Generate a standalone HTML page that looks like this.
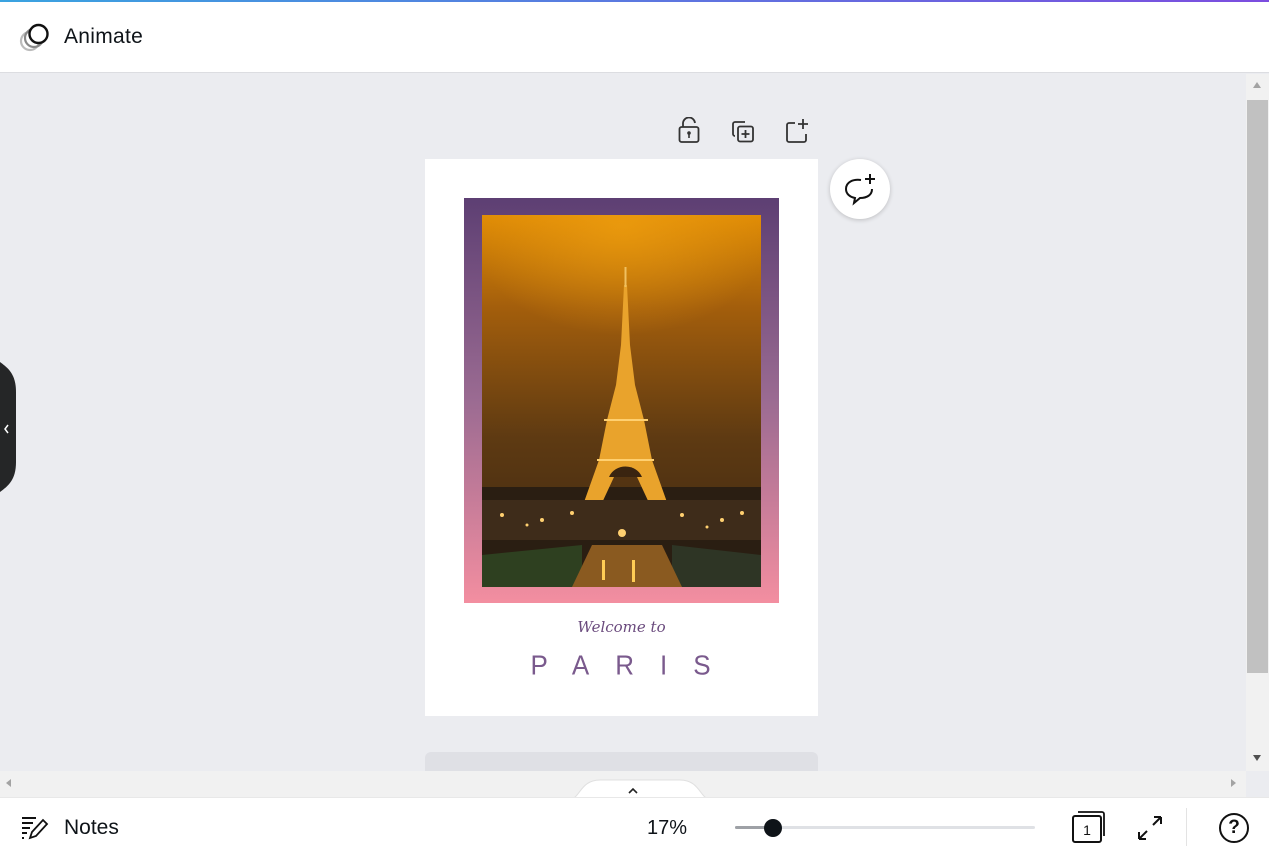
<!DOCTYPE html>
<html><head><meta charset="utf-8"><style>
*{margin:0;padding:0;box-sizing:border-box}
body{width:1269px;height:848px;overflow:hidden;background:#ebecf0;font-family:"Liberation Sans",sans-serif;position:relative}
.top{position:absolute;left:0;top:0;width:1269px;height:73px;background:#fff;border-bottom:1px solid #dcdde1}
.bar{position:absolute;left:0;top:0;width:1269px;height:2px;background:linear-gradient(90deg,#3aa3e0,#7c4ddf)}
.abs{position:absolute}
</style></head><body>
<div class="top"><div class="bar"></div>
<svg class="abs" style="left:17px;top:20px" width="36" height="36" viewBox="0 0 36 36">
<circle cx="13" cy="21" r="9" fill="none" stroke="#bbb" stroke-width="2.2"/>
<circle cx="17" cy="18" r="9" fill="none" stroke="#888" stroke-width="2.2"/>
<circle cx="21.5" cy="14" r="9" fill="#fff" stroke="#111" stroke-width="2.4"/>
</svg>
<div class="abs" style="left:64px;top:25px;font-size:21px;color:#0e1318;letter-spacing:.3px">Animate</div>
</div>
<div class="abs" style="left:1246px;top:74px;width:23px;height:697px;background:#f1f1f1"></div>
<div class="abs" style="left:1247px;top:100px;width:21px;height:573px;background:#c1c1c1"></div>
<div class="abs" style="left:1253px;top:82px;width:0;height:0;border-left:4px solid transparent;border-right:4px solid transparent;border-bottom:6px solid #a3a3a3"></div>
<div class="abs" style="left:1253px;top:755px;width:0;height:0;border-left:4px solid transparent;border-right:4px solid transparent;border-top:6px solid #505050"></div>
<div class="abs" style="left:0;top:771px;width:1246px;height:26px;background:#f1f1f1"></div>
<div class="abs" style="left:6px;top:779px;width:0;height:0;border-top:4px solid transparent;border-bottom:4px solid transparent;border-right:5px solid #a3a3a3"></div>
<div class="abs" style="left:1231px;top:779px;width:0;height:0;border-top:4px solid transparent;border-bottom:4px solid transparent;border-left:5px solid #a3a3a3"></div>
<div class="abs" style="left:425px;top:752px;width:393px;height:19px;background:#dfe0e5;border-radius:6px 6px 0 0"></div>
<svg class="abs" style="left:570px;top:778px" width="140" height="21" viewBox="0 0 140 21"><path d="M0 21 C10 21 10 2 30 2 L110 2 C130 2 130 21 140 21 Z" fill="#fff" stroke="#e0e0e0"/></svg>
<svg class="abs" style="left:627px;top:786px" width="12" height="10"><path d="M2 7 L6 3 L10 7" fill="none" stroke="#222" stroke-width="1.6"/></svg>
<svg class="abs" style="left:0;top:362px" width="18" height="130" viewBox="0 0 18 130"><path d="M0 0 C8 6 16 12 16 30 L16 100 C16 118 8 124 0 130 Z" fill="#252627"/><path d="M8 63 L5 67 L8 71" fill="none" stroke="#fff" stroke-width="1.5"/></svg>
<svg class="abs" style="left:678px;top:117px" width="22" height="28" viewBox="0 0 22 28"><path d="M5 10 V7 A6 6 0 0 1 17 6" fill="none" stroke="#333" stroke-width="1.8"/><rect x="1.5" y="10" width="19" height="15" rx="2" fill="none" stroke="#333" stroke-width="1.8"/><circle cx="11" cy="16" r="1.8" fill="#333"/><rect x="10.2" y="16" width="1.6" height="5" fill="#333"/></svg>
<svg class="abs" style="left:731px;top:119px" width="26" height="26" viewBox="0 0 26 26"><path d="M14 3 H4 A2 2 0 0 0 2 5 V15 a2 2 0 0 0 2 2" fill="none" stroke="#333" stroke-width="1.8"/><rect x="7" y="7.5" width="15" height="15" rx="2" fill="none" stroke="#333" stroke-width="1.8"/><path d="M14.5 11 V19 M10.5 15 H18.5" stroke="#333" stroke-width="1.8"/></svg>
<svg class="abs" style="left:785px;top:117px" width="26" height="28" viewBox="0 0 26 28"><path d="M10 6 H4 A2 2 0 0 0 2 8 V23 A2 2 0 0 0 4 25 H19 A2 2 0 0 0 21 23 V17" fill="none" stroke="#333" stroke-width="1.8"/><path d="M18 2 V12 M13 7 H23" stroke="#333" stroke-width="1.8"/></svg>
<div class="abs" style="left:830px;top:159px;width:60px;height:60px;border-radius:50%;background:#fff;box-shadow:0 1px 5px rgba(0,0,0,.2)"></div>
<svg class="abs" style="left:843px;top:172px" width="36" height="36" viewBox="0 0 36 36"><path d="M18 8 C10 7 3 10 3 17 C3 22 7 25 12 26 L11 31 L17 26 C24 26 29 23 29 17" fill="none" stroke="#111" stroke-width="2"/><path d="M27 2 V12 M22 7 H32" stroke="#111" stroke-width="2"/></svg>
<div class="abs" style="left:425px;top:159px;width:393px;height:557px;background:#fff"></div>
<div class="abs" style="left:464px;top:198px;width:315px;height:405px;background:linear-gradient(180deg,#5d3f73 0%,#9b6b92 50%,#f38ea0 100%)"></div>
<svg class="abs" style="left:482px;top:215px" width="279" height="372" viewBox="0 0 279 372">
<defs><linearGradient id="sk" x1="0" y1="0" x2="0" y2="1"><stop offset="0" stop-color="#e08c05"/><stop offset=".25" stop-color="#a35e0c"/><stop offset=".6" stop-color="#5e3a12"/><stop offset="1" stop-color="#3a2612"/></linearGradient>
<radialGradient id="gl" cx=".5" cy=".05" r=".55"><stop offset="0" stop-color="#f0a010" stop-opacity=".7"/><stop offset="1" stop-color="#f0a010" stop-opacity="0"/></radialGradient></defs>
<rect width="279" height="372" fill="url(#sk)"/><rect width="279" height="200" fill="url(#gl)"/>
<rect y="272" width="279" height="100" fill="#2a1e12"/>
<path d="M142 70 L145 70 L148 130 L153 170 L162 205 L170 245 L186 290 L168 290 L155 262 L132 262 L119 290 L101 290 L117 245 L125 205 L134 170 L139 130 Z" fill="#e9a32c"/>
<path d="M143.5 52 V72" stroke="#f0c060" stroke-width="2"/>
<path d="M127 262 C133 248 154 248 160 262 Z" fill="#3a2410"/>
<path d="M122 205 H166 M115 245 H172" stroke="#ffd070" stroke-width="2"/>
<rect x="0" y="285" width="279" height="40" fill="#3e2c1a"/>
<g fill="#ffd070"><circle cx="20" cy="300" r="2"/><circle cx="45" cy="310" r="1.5"/><circle cx="60" cy="305" r="2"/><circle cx="90" cy="298" r="2"/><circle cx="200" cy="300" r="2"/><circle cx="225" cy="312" r="1.5"/><circle cx="240" cy="305" r="2"/><circle cx="260" cy="298" r="2"/><circle cx="140" cy="318" r="4"/></g>
<path d="M0 340 L100 330 L100 372 L0 372 Z" fill="#2e4020"/><path d="M279 340 L190 330 L190 372 L279 372 Z" fill="#2e3525"/>
<path d="M110 330 L180 330 L200 372 L90 372 Z" fill="#8a5a20"/>
<g fill="#ffcc55"><rect x="120" y="345" width="3" height="20"/><rect x="150" y="345" width="3" height="22"/></g>
</svg>
<div class="abs" style="left:425px;top:618px;width:393px;text-align:center;font-family:'DejaVu Serif',serif;font-style:italic;font-size:15px;color:#6a4a7d">Welcome to</div>
<div class="abs" style="left:425px;top:650px;width:393px;text-align:center;padding-left:24px;font-size:26px;font-weight:100;letter-spacing:26px;color:#7a5a8d;transform:scaleY(1.05)">PARIS</div>
<div class="abs" style="left:0;top:797px;width:1269px;height:51px;background:#fff;border-top:1px solid #e8e8e8"></div>
<svg class="abs" style="left:20px;top:815px" width="30" height="26" viewBox="0 0 30 26"><path d="M2 3 H16 M2 8 H13 M2 13 H10 M2 18 H7 M2 23 H4" stroke="#111" stroke-width="2"/><path d="M10 23 L12 17 L23 5 L27 9 L16 21 Z" fill="none" stroke="#111" stroke-width="1.8"/></svg>
<div class="abs" style="left:64px;top:816px;font-size:21px;color:#0e1318">Notes</div>
<div class="abs" style="left:647px;top:817px;font-size:20px;color:#0e1318">17%</div>
<div class="abs" style="left:735px;top:826px;width:300px;height:3px;background:#dfe1e5;border-radius:2px"></div>
<div class="abs" style="left:735px;top:826px;width:35px;height:3px;background:#9ea1a6;border-radius:2px"></div>
<div class="abs" style="left:764px;top:819px;width:18px;height:18px;border-radius:50%;background:#0e1318"></div>
<svg class="abs" style="left:1070px;top:810px" width="36" height="34" viewBox="0 0 36 34"><path d="M8 2 H32 a2 2 0 0 1 2 2 V26" fill="none" stroke="#111" stroke-width="1.8"/><rect x="3" y="6" width="28" height="26" rx="2" fill="#fff" stroke="#111" stroke-width="2"/><text x="17" y="25" font-size="14" text-anchor="middle" fill="#111" font-family="Liberation Sans">1</text></svg>
<svg class="abs" style="left:1136px;top:814px" width="28" height="28" viewBox="0 0 28 28"><path d="M3 25 L11 17 M3 25 V18 M3 25 H10 M25 3 L17 11 M25 3 V10 M25 3 H18" fill="none" stroke="#111" stroke-width="2"/></svg>
<div class="abs" style="left:1186px;top:808px;width:1px;height:38px;background:#e3e3e3"></div>
<div class="abs" style="left:1219px;top:813px;width:30px;height:30px;border-radius:50%;border:2px solid #111;text-align:center;font-size:19px;line-height:26px;font-weight:bold;color:#111">?</div>
</body></html>
